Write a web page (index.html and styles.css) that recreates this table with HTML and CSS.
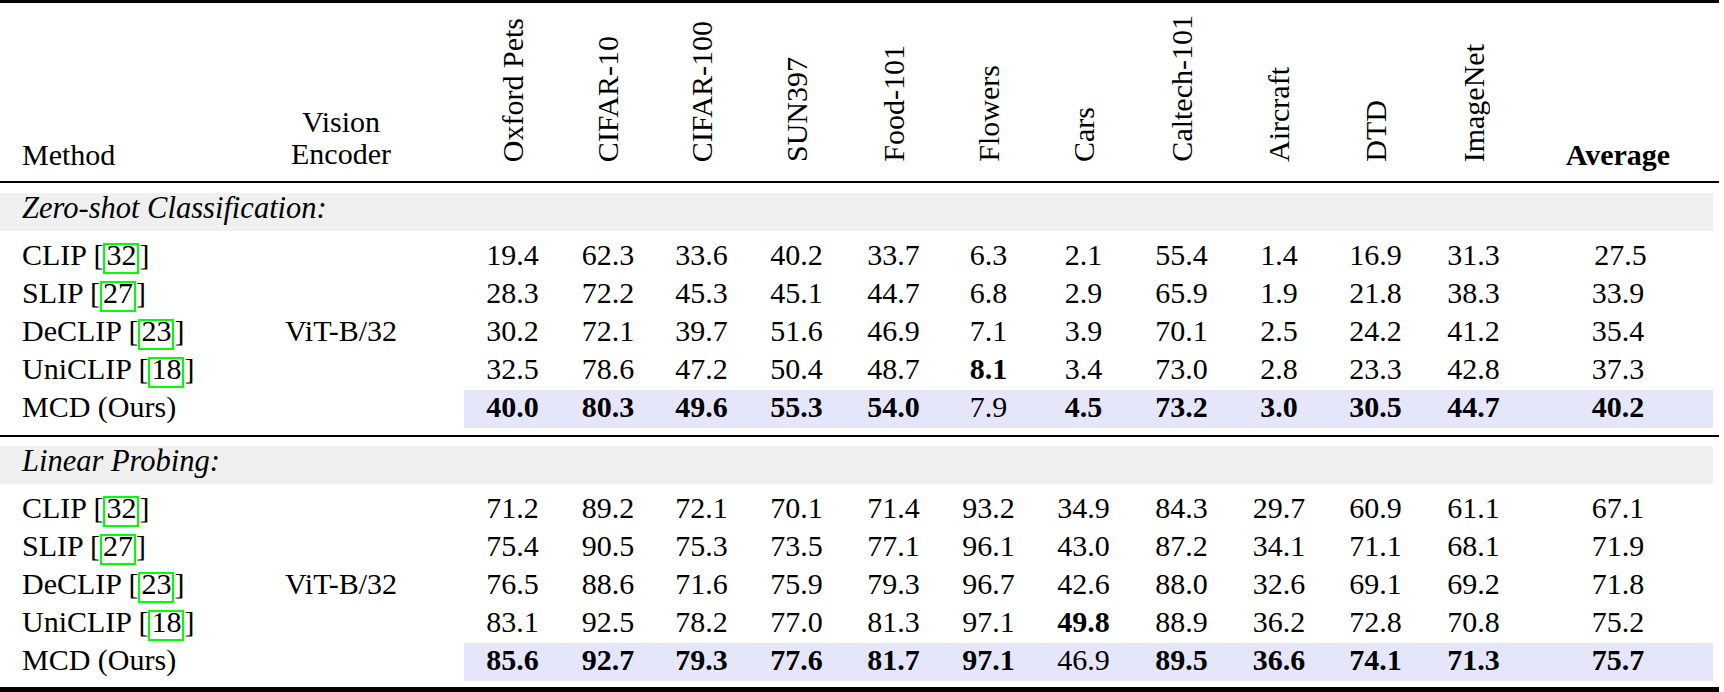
FILE: index.html
```html
<!DOCTYPE html>
<html lang="en">
<head>
<meta charset="utf-8">
<title>Results table</title>
<link rel="stylesheet" href="styles.css">
</head>
<body>
<div class="table">
  <div class="rule rule--top"></div>
  <div class="row row--head">
    <div class="cell cell--method head-text">Method</div>
    <div class="cell cell--enc head-text head-text--two">Vision<br>Encoder</div>
    <div class="cell cell--rot"><span class="rot">Oxford Pets</span></div>
    <div class="cell cell--rot"><span class="rot">CIFAR-10</span></div>
    <div class="cell cell--rot"><span class="rot">CIFAR-100</span></div>
    <div class="cell cell--rot"><span class="rot">SUN397</span></div>
    <div class="cell cell--rot"><span class="rot">Food-101</span></div>
    <div class="cell cell--rot"><span class="rot">Flowers</span></div>
    <div class="cell cell--rot"><span class="rot">Cars</span></div>
    <div class="cell cell--rot"><span class="rot">Caltech-101</span></div>
    <div class="cell cell--rot"><span class="rot">Aircraft</span></div>
    <div class="cell cell--rot"><span class="rot">DTD</span></div>
    <div class="cell cell--rot"><span class="rot">ImageNet</span></div>
    <div class="cell cell--num head-text"><b>Average</b></div>
  </div>
  <div class="rule rule--mid"></div>

  <div class="group group--first">
    <div class="group-title">Zero-shot Classification:</div>
    <div class="row">
      <div class="cell cell--method">CLIP [<span class="cite">32</span>]</div>
      <div class="cell cell--enc"></div>
      <div class="cell cell--num">19.4</div><div class="cell cell--num">62.3</div><div class="cell cell--num">33.6</div><div class="cell cell--num">40.2</div><div class="cell cell--num">33.7</div><div class="cell cell--num">6.3</div><div class="cell cell--num">2.1</div><div class="cell cell--num">55.4</div><div class="cell cell--num">1.4</div><div class="cell cell--num">16.9</div><div class="cell cell--num">31.3</div><div class="cell cell--num cell--nudge">27.5</div>
    </div>
    <div class="row">
      <div class="cell cell--method">SLIP [<span class="cite">27</span>]</div>
      <div class="cell cell--enc"></div>
      <div class="cell cell--num">28.3</div><div class="cell cell--num">72.2</div><div class="cell cell--num">45.3</div><div class="cell cell--num">45.1</div><div class="cell cell--num">44.7</div><div class="cell cell--num">6.8</div><div class="cell cell--num">2.9</div><div class="cell cell--num">65.9</div><div class="cell cell--num">1.9</div><div class="cell cell--num">21.8</div><div class="cell cell--num">38.3</div><div class="cell cell--num">33.9</div>
    </div>
    <div class="row">
      <div class="cell cell--method">DeCLIP [<span class="cite">23</span>]</div>
      <div class="cell cell--enc">ViT-B/32</div>
      <div class="cell cell--num">30.2</div><div class="cell cell--num">72.1</div><div class="cell cell--num">39.7</div><div class="cell cell--num">51.6</div><div class="cell cell--num">46.9</div><div class="cell cell--num">7.1</div><div class="cell cell--num">3.9</div><div class="cell cell--num">70.1</div><div class="cell cell--num">2.5</div><div class="cell cell--num">24.2</div><div class="cell cell--num">41.2</div><div class="cell cell--num">35.4</div>
    </div>
    <div class="row">
      <div class="cell cell--method">UniCLIP [<span class="cite">18</span>]</div>
      <div class="cell cell--enc"></div>
      <div class="cell cell--num">32.5</div><div class="cell cell--num">78.6</div><div class="cell cell--num">47.2</div><div class="cell cell--num">50.4</div><div class="cell cell--num">48.7</div><div class="cell cell--num cell--best">8.1</div><div class="cell cell--num">3.4</div><div class="cell cell--num">73.0</div><div class="cell cell--num">2.8</div><div class="cell cell--num">23.3</div><div class="cell cell--num">42.8</div><div class="cell cell--num">37.3</div>
    </div>
    <div class="row row--ours">
      <div class="cell cell--method">MCD (Ours)</div>
      <div class="cell cell--enc"></div>
      <div class="cell cell--num cell--best">40.0</div><div class="cell cell--num cell--best">80.3</div><div class="cell cell--num cell--best">49.6</div><div class="cell cell--num cell--best">55.3</div><div class="cell cell--num cell--best">54.0</div><div class="cell cell--num">7.9</div><div class="cell cell--num cell--best">4.5</div><div class="cell cell--num cell--best">73.2</div><div class="cell cell--num cell--best">3.0</div><div class="cell cell--num cell--best">30.5</div><div class="cell cell--num cell--best">44.7</div><div class="cell cell--num cell--best">40.2</div>
    </div>
  </div>

  <div class="rule rule--mid"></div>

  <div class="group group--second">
    <div class="group-title">Linear Probing:</div>
    <div class="row">
      <div class="cell cell--method">CLIP [<span class="cite">32</span>]</div>
      <div class="cell cell--enc"></div>
      <div class="cell cell--num">71.2</div><div class="cell cell--num">89.2</div><div class="cell cell--num">72.1</div><div class="cell cell--num">70.1</div><div class="cell cell--num">71.4</div><div class="cell cell--num">93.2</div><div class="cell cell--num">34.9</div><div class="cell cell--num">84.3</div><div class="cell cell--num">29.7</div><div class="cell cell--num">60.9</div><div class="cell cell--num">61.1</div><div class="cell cell--num">67.1</div>
    </div>
    <div class="row">
      <div class="cell cell--method">SLIP [<span class="cite">27</span>]</div>
      <div class="cell cell--enc"></div>
      <div class="cell cell--num">75.4</div><div class="cell cell--num">90.5</div><div class="cell cell--num">75.3</div><div class="cell cell--num">73.5</div><div class="cell cell--num">77.1</div><div class="cell cell--num">96.1</div><div class="cell cell--num">43.0</div><div class="cell cell--num">87.2</div><div class="cell cell--num">34.1</div><div class="cell cell--num">71.1</div><div class="cell cell--num">68.1</div><div class="cell cell--num">71.9</div>
    </div>
    <div class="row">
      <div class="cell cell--method">DeCLIP [<span class="cite">23</span>]</div>
      <div class="cell cell--enc">ViT-B/32</div>
      <div class="cell cell--num">76.5</div><div class="cell cell--num">88.6</div><div class="cell cell--num">71.6</div><div class="cell cell--num">75.9</div><div class="cell cell--num">79.3</div><div class="cell cell--num">96.7</div><div class="cell cell--num">42.6</div><div class="cell cell--num">88.0</div><div class="cell cell--num">32.6</div><div class="cell cell--num">69.1</div><div class="cell cell--num">69.2</div><div class="cell cell--num">71.8</div>
    </div>
    <div class="row">
      <div class="cell cell--method">UniCLIP [<span class="cite">18</span>]</div>
      <div class="cell cell--enc"></div>
      <div class="cell cell--num">83.1</div><div class="cell cell--num">92.5</div><div class="cell cell--num">78.2</div><div class="cell cell--num">77.0</div><div class="cell cell--num">81.3</div><div class="cell cell--num">97.1</div><div class="cell cell--num cell--best">49.8</div><div class="cell cell--num">88.9</div><div class="cell cell--num">36.2</div><div class="cell cell--num">72.8</div><div class="cell cell--num">70.8</div><div class="cell cell--num">75.2</div>
    </div>
    <div class="row row--ours">
      <div class="cell cell--method">MCD (Ours)</div>
      <div class="cell cell--enc"></div>
      <div class="cell cell--num cell--best">85.6</div><div class="cell cell--num cell--best">92.7</div><div class="cell cell--num cell--best">79.3</div><div class="cell cell--num cell--best">77.6</div><div class="cell cell--num cell--best">81.7</div><div class="cell cell--num cell--best">97.1</div><div class="cell cell--num">46.9</div><div class="cell cell--num cell--best">89.5</div><div class="cell cell--num cell--best">36.6</div><div class="cell cell--num cell--best">74.1</div><div class="cell cell--num cell--best">71.3</div><div class="cell cell--num cell--best">75.7</div>
    </div>
  </div>
  <div class="rule rule--bottom"></div>
</div>
</body>
</html>
```

FILE: styles.css
```css
html, body {
  margin: 0;
  padding: 0;
  background: #ffffff;
}

body {
  font-family: "Liberation Serif", "Times New Roman", serif;
  font-size: 30px;
  color: #000000;
  overflow: hidden;
}

.table {
  width: 1719px;
}

.rule {
  background: #000000;
  width: 1719px;
}

.rule--top { height: 3px; }
.rule--mid { height: 2px; }
.rule--bottom { height: 5px; }

.row {
  display: grid;
  grid-template-columns: 222px 242px 97px 94px 93px 97px 97px 93px 97px 99px 96px 97px 99px 190px;
  width: 1713px;
}

.cell {
  line-height: 33px;
  height: 33px;
  padding-bottom: 5px;
  white-space: nowrap;
}

.cell--method {
  padding-left: 22px;
}

.cell--enc {
  text-align: center;
  padding-right: 4px;
}

.cell--num {
  text-align: center;
}

.cell--nudge {
  padding-left: 5px;
}

.cell--best {
  font-weight: bold;
}

.row--ours .cell--num {
  background: #e6e6fa;
}

/* header row */
.row--head {
  height: 178px;
  align-items: end;
}

.row--head .cell {
  height: auto;
  padding-bottom: 0;
}

.head-text {
  line-height: 30px;
  margin-bottom: 11px;
}

.head-text--two {
  line-height: 32px;
}

.cell--rot {
  display: flex;
  justify-content: center;
  margin-bottom: 19px;
}

.rot {
  writing-mode: vertical-rl;
  transform: rotate(180deg);
  line-height: 30px;
  white-space: nowrap;
}

/* groups */
.group--first {
  padding: 10px 0 7px;
}

.group--second {
  padding: 9px 0 6px;
}

.group-title {
  width: 1691px;
  height: 30px;
  line-height: 30px;
  padding: 0 0 8px 22px;
  margin-bottom: 7px;
  background: #f0f0f0;
  font-style: italic;
  font-size: 30.5px;
}

/* citation link boxes */
.cite {
  display: inline-block;
  border: 2px solid #00ff00;
  line-height: 20px;
  height: 20px;
  padding: 0 1px 7px;
  vertical-align: baseline;
}
```
